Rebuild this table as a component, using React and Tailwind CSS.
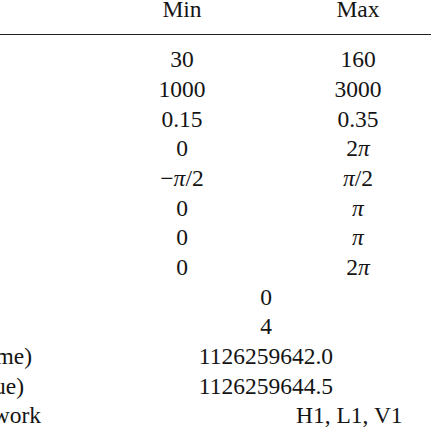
const rows = [
  { label: 'Total mass (M⊙)', min: '30', max: '160' },
  { label: 'Distance (Mpc)', min: '1000', max: '3000' },
  { label: 'Mass ratio', min: '0.15', max: '0.35' },
  { label: 'Right ascension', min: '0', max: <>2<i>π</i></> },
  { label: 'Declination', min: <>−<i>π</i>/2</>, max: <><i>π</i>/2</> },
  { label: 'Inclination', min: '0', max: <i>π</i> },
  { label: 'Polarization', min: '0', max: <i>π</i> },
  { label: 'Phase', min: '0', max: <>2<i>π</i></> },
]

const spans = [
  { label: 'Spin', value: '0' },
  { label: 'PN order', value: '4' },
]

function Label({ children, pr = 'pr-[180px]' }) {
  return (
    <div className={`ml-[-230px] w-[342px] shrink-0 flex justify-end whitespace-nowrap ${pr}`}>
      {children}
    </div>
  )
}

export default function App() {
  return (
    <div
      className="w-[431px] h-[431px] overflow-hidden bg-white text-[#141414] text-[23.5px] leading-[29.67px]"
      style={{ fontFamily: '"Liberation Serif", "Times New Roman", serif' }}
    >
      {/* header */}
      <div className="flex mt-[-5.5px]">
        <Label>Parameter</Label>
        <div className="w-[140px] text-center">Min</div>
        <div className="w-[44px]" />
        <div className="w-[124px] text-center">Max</div>
      </div>
      <div className="mt-[9.4px] h-[1.5px] bg-[#222]" />

      <div className="mt-[10.1px]">
        {rows.map((r, i) => (
          <div key={i} className="flex">
            <Label>{r.label}</Label>
            <div className="w-[140px] text-center">{r.min}</div>
            <div className="w-[44px]" />
            <div className="w-[124px] text-center">{r.max}</div>
          </div>
        ))}

        {spans.map((s, i) => (
          <div key={i} className="flex">
            <Label>{s.label}</Label>
            <div className="w-[308px] text-center">{s.value}</div>
          </div>
        ))}

        <div className="flex">
          <Label pr="pr-[80px]">Start (GPS time)</Label>
          <div className="w-[308px] text-center">1126259642.0</div>
        </div>
        <div className="flex">
          <Label pr="pr-[88px]">End (GPS value)</Label>
          <div className="w-[308px] text-center">1126259644.5</div>
        </div>
        <div className="flex">
          <Label pr="pr-[71px]">Detector network</Label>
          <div className="w-[184px]" />
          <div className="w-[124px] text-left">H1, L1, V1</div>
        </div>
      </div>
    </div>
  )
}
